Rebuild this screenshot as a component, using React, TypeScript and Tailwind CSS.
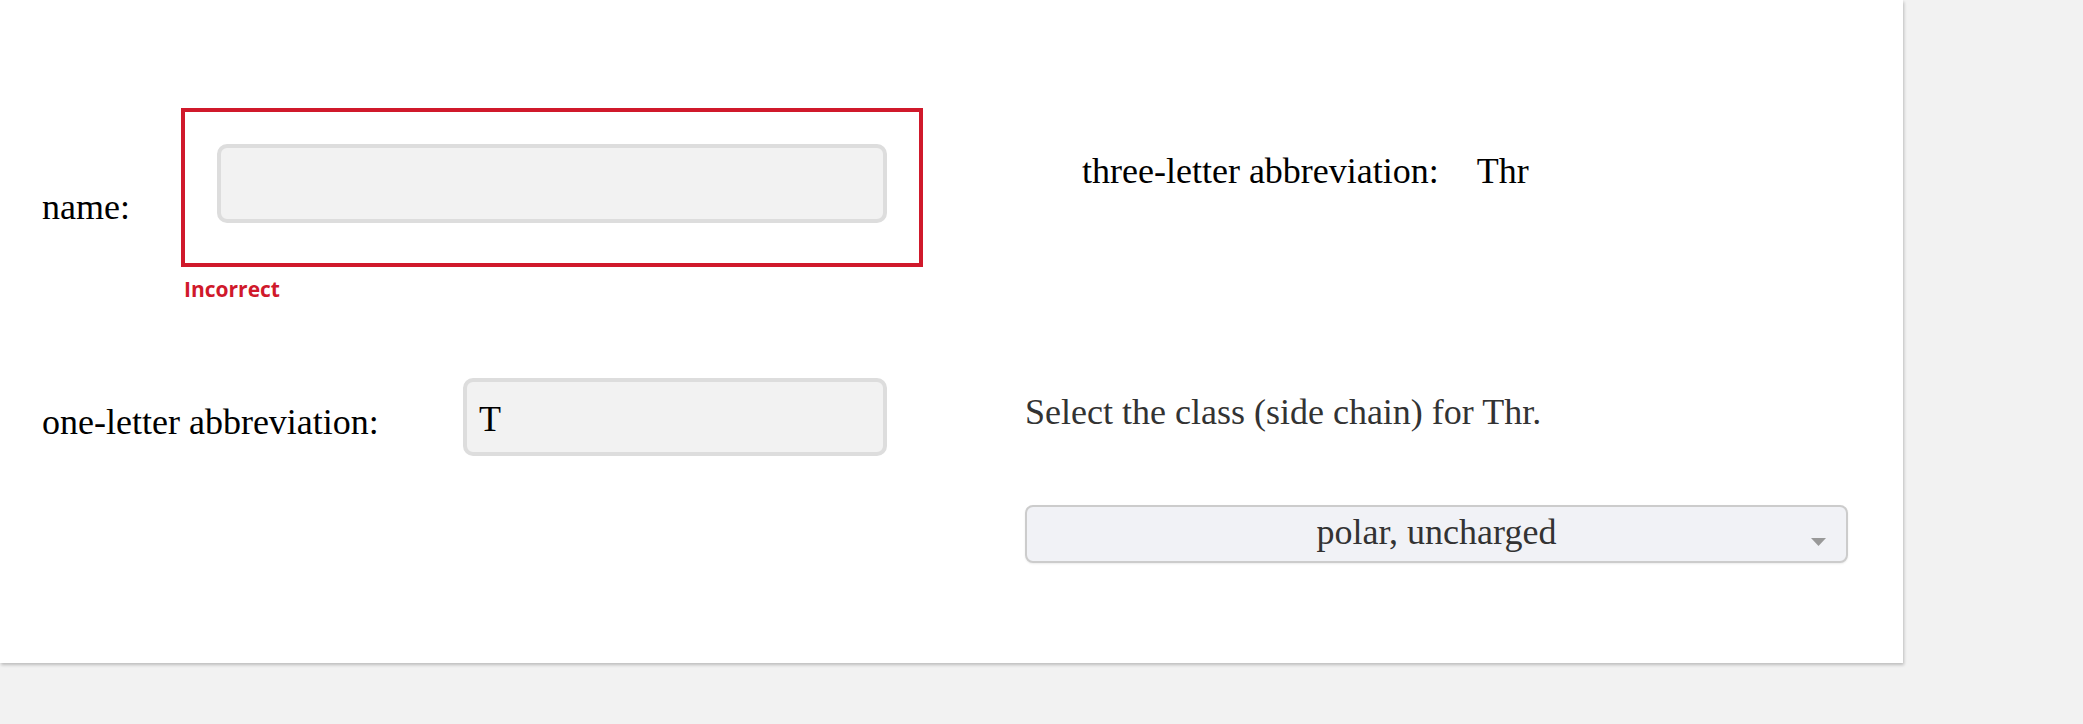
export default function App() {
  return (
    <div className="min-h-[724px] w-full bg-[#f2f2f2] font-['Liberation_Serif',serif] text-[36px] leading-[36px]">
      <div className="flex h-[663px] w-[1903px] bg-white shadow-[1px_2px_3px_rgba(0,0,0,0.22)]">
        {/* left column */}
        <div className="w-[1025px] shrink-0 pl-[42px] pt-[108px]">
          <div className="flex items-start">
            <div className="mt-[81px] w-[139px] shrink-0 text-black">name:</div>
            <div>
              <div className="w-[742px] border-4 border-[#d0192b] px-[32px] pt-[32px] pb-[40px]">
                <input
                  readOnly
                  value=""
                  className="block h-[79px] w-[670px] rounded-[10px] border-4 border-[#dddddd] bg-[#f2f2f2] px-[14px] text-black outline-none"
                />
              </div>
              <div className="mt-[12px] ml-[3px] font-['Open_Sans',sans-serif] text-[21px] leading-[21px] font-bold text-[#d0192b]">
                Incorrect
              </div>
            </div>
          </div>

          <div className="mt-[78px] flex items-start">
            <div className="mt-[26px] w-[421px] shrink-0 text-black">one-letter abbreviation:</div>
            <input
              readOnly
              value="T"
              className="block h-[78px] w-[424px] rounded-[10px] border-4 border-[#dddddd] bg-[#f2f2f2] px-[12px] pt-[3px] text-black outline-none"
            />
          </div>
        </div>

        {/* right column */}
        <div className="pt-[153px]">
          <div className="ml-[57px] flex text-black">
            <span>three-letter abbreviation:</span>
            <span className="ml-[38px]">Thr</span>
          </div>

          <div className="mt-[205px] text-[#333333]">Select the class (side chain) for Thr.</div>

          <div className="relative mt-[75px] flex h-[58px] w-[823px] items-start justify-center rounded-[8px] border-2 border-[#cccccc] bg-[#f1f2f6] pt-[7px] text-[#333333] shadow-[0_1px_2px_rgba(0,0,0,0.08)]">
            <span>polar, uncharged</span>
            <svg
              className="absolute right-[20px] top-[31px]"
              width="15"
              height="8"
              viewBox="0 0 15 8"
            >
              <path d="M0 0 L15 0 L7.5 8 Z" fill="#999999" />
            </svg>
          </div>
        </div>
      </div>
    </div>
  );
}
